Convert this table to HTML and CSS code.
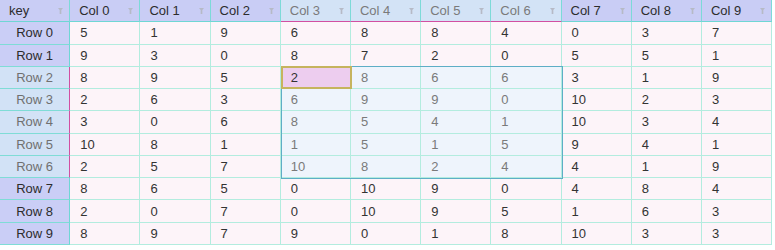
FILE: index.html
```html
<!DOCTYPE html>
<html>
<head>
<meta charset="utf-8">
<link rel="stylesheet" href="styles.css">
</head>
<body>
<div class="grid">
  <div class="hd corner"><span>key</span><svg class="flt" viewBox="0 0 6 7"><path d="M0 0H6L4 2.2V7H2V2.2Z"/></svg></div>
  <div class="hd"><span>Col 0</span><svg class="flt" viewBox="0 0 6 7"><path d="M0 0H6L4 2.2V7H2V2.2Z"/></svg></div>
  <div class="hd"><span>Col 1</span><svg class="flt" viewBox="0 0 6 7"><path d="M0 0H6L4 2.2V7H2V2.2Z"/></svg></div>
  <div class="hd"><span>Col 2</span><svg class="flt" viewBox="0 0 6 7"><path d="M0 0H6L4 2.2V7H2V2.2Z"/></svg></div>
  <div class="hd sel"><span>Col 3</span><svg class="flt" viewBox="0 0 6 7"><path d="M0 0H6L4 2.2V7H2V2.2Z"/></svg></div>
  <div class="hd sel"><span>Col 4</span><svg class="flt" viewBox="0 0 6 7"><path d="M0 0H6L4 2.2V7H2V2.2Z"/></svg></div>
  <div class="hd sel"><span>Col 5</span><svg class="flt" viewBox="0 0 6 7"><path d="M0 0H6L4 2.2V7H2V2.2Z"/></svg></div>
  <div class="hd sel"><span>Col 6</span><svg class="flt" viewBox="0 0 6 7"><path d="M0 0H6L4 2.2V7H2V2.2Z"/></svg></div>
  <div class="hd"><span>Col 7</span><svg class="flt" viewBox="0 0 6 7"><path d="M0 0H6L4 2.2V7H2V2.2Z"/></svg></div>
  <div class="hd"><span>Col 8</span><svg class="flt" viewBox="0 0 6 7"><path d="M0 0H6L4 2.2V7H2V2.2Z"/></svg></div>
  <div class="hd"><span>Col 9</span><svg class="flt" viewBox="0 0 6 7"><path d="M0 0H6L4 2.2V7H2V2.2Z"/></svg></div>

  <div class="rh">Row 0</div>
  <div class="c">5</div><div class="c">1</div><div class="c">9</div><div class="c">6</div><div class="c">8</div><div class="c">8</div><div class="c">4</div><div class="c">0</div><div class="c">3</div><div class="c">7</div>

  <div class="rh">Row 1</div>
  <div class="c">9</div><div class="c">3</div><div class="c">0</div><div class="c">8</div><div class="c">7</div><div class="c">2</div><div class="c">0</div><div class="c">5</div><div class="c">5</div><div class="c">1</div>

  <div class="rh sel">Row 2</div>
  <div class="c">8</div><div class="c">9</div><div class="c">5</div><div class="c act">2</div><div class="c in">8</div><div class="c in">6</div><div class="c in">6</div><div class="c">3</div><div class="c">1</div><div class="c">9</div>

  <div class="rh sel">Row 3</div>
  <div class="c">2</div><div class="c">6</div><div class="c">3</div><div class="c in">6</div><div class="c in">9</div><div class="c in">9</div><div class="c in">0</div><div class="c">10</div><div class="c">2</div><div class="c">3</div>

  <div class="rh sel">Row 4</div>
  <div class="c">3</div><div class="c">0</div><div class="c">6</div><div class="c in">8</div><div class="c in">5</div><div class="c in">4</div><div class="c in">1</div><div class="c">10</div><div class="c">3</div><div class="c">4</div>

  <div class="rh sel">Row 5</div>
  <div class="c">10</div><div class="c">8</div><div class="c">1</div><div class="c in">1</div><div class="c in">5</div><div class="c in">1</div><div class="c in">5</div><div class="c">9</div><div class="c">4</div><div class="c">1</div>

  <div class="rh sel">Row 6</div>
  <div class="c">2</div><div class="c">5</div><div class="c">7</div><div class="c in">10</div><div class="c in">8</div><div class="c in">2</div><div class="c in">4</div><div class="c">4</div><div class="c">1</div><div class="c">9</div>

  <div class="rh">Row 7</div>
  <div class="c">8</div><div class="c">6</div><div class="c">5</div><div class="c">0</div><div class="c">10</div><div class="c">9</div><div class="c">0</div><div class="c">4</div><div class="c">8</div><div class="c">4</div>

  <div class="rh">Row 8</div>
  <div class="c">2</div><div class="c">0</div><div class="c">7</div><div class="c">0</div><div class="c">10</div><div class="c">9</div><div class="c">5</div><div class="c">1</div><div class="c">6</div><div class="c">3</div>

  <div class="rh">Row 9</div>
  <div class="c">8</div><div class="c">9</div><div class="c">7</div><div class="c">9</div><div class="c">0</div><div class="c">1</div><div class="c">8</div><div class="c">10</div><div class="c">3</div><div class="c">3</div>

  <div class="range"></div>
  <div class="active"></div>
</div>
</body>
</html>
```

FILE: styles.css
```css
html, body {
  margin: 0;
  padding: 0;
  background: #ffffff;
}

.grid {
  position: relative;
  display: grid;
  grid-template-columns: repeat(11, 70.2px);
  grid-template-rows: repeat(11, 22.27px);
  font-family: "Liberation Sans", Arial, sans-serif;
  font-size: 13px;
  color: #333;
}

.grid > div {
  box-sizing: border-box;
  display: flex;
  align-items: center;
  white-space: nowrap;
  overflow: hidden;
}

.hd {
  background: #c9cdf5;
  border-right: 1px solid #7cdad8;
  border-bottom: 1px solid #6fd6d4;
  justify-content: space-between;
  padding: 0 6px 0 9px;
  color: #2c2c2c;
}

.hd.sel {
  background: #d3e3f6;
  color: #7a7a7a;
  border-bottom-color: #d24fa2;
}

.flt {
  width: 5px;
  height: 6px;
  fill: #b6bac6;
  flex: none;
  margin-top: 1px;
}

.rh {
  background: #cacef6;
  border-right: 1px solid #6fd6d4;
  border-bottom: 1px solid #7fdcd6;
  justify-content: center;
  color: #2c2c2c;
}

.rh.sel {
  background: #d2e2f6;
  color: #707070;
  border-right-color: #d24fa2;
}

.c {
  background: #fdf4f9;
  border-right: 1px solid #b3ecdf;
  border-bottom: 1px solid #b3ecdf;
  padding-left: 10px;
}

.c.in {
  background: #eef4fc;
  color: #7a7a7a;
}

.c.act {
  background: #edcdef;
  color: #333;
}

.range {
  position: absolute;
  left: 280.8px;
  top: 66.3px;
  width: 281.8px;
  height: 112.3px;
  box-sizing: border-box;
  border: 1px solid #5eaec6;
  pointer-events: none;
}

.active {
  position: absolute;
  left: 280.8px;
  top: 66.3px;
  width: 70.8px;
  height: 23px;
  box-sizing: border-box;
  border: 2px solid #c6b45e;
  pointer-events: none;
}
```
